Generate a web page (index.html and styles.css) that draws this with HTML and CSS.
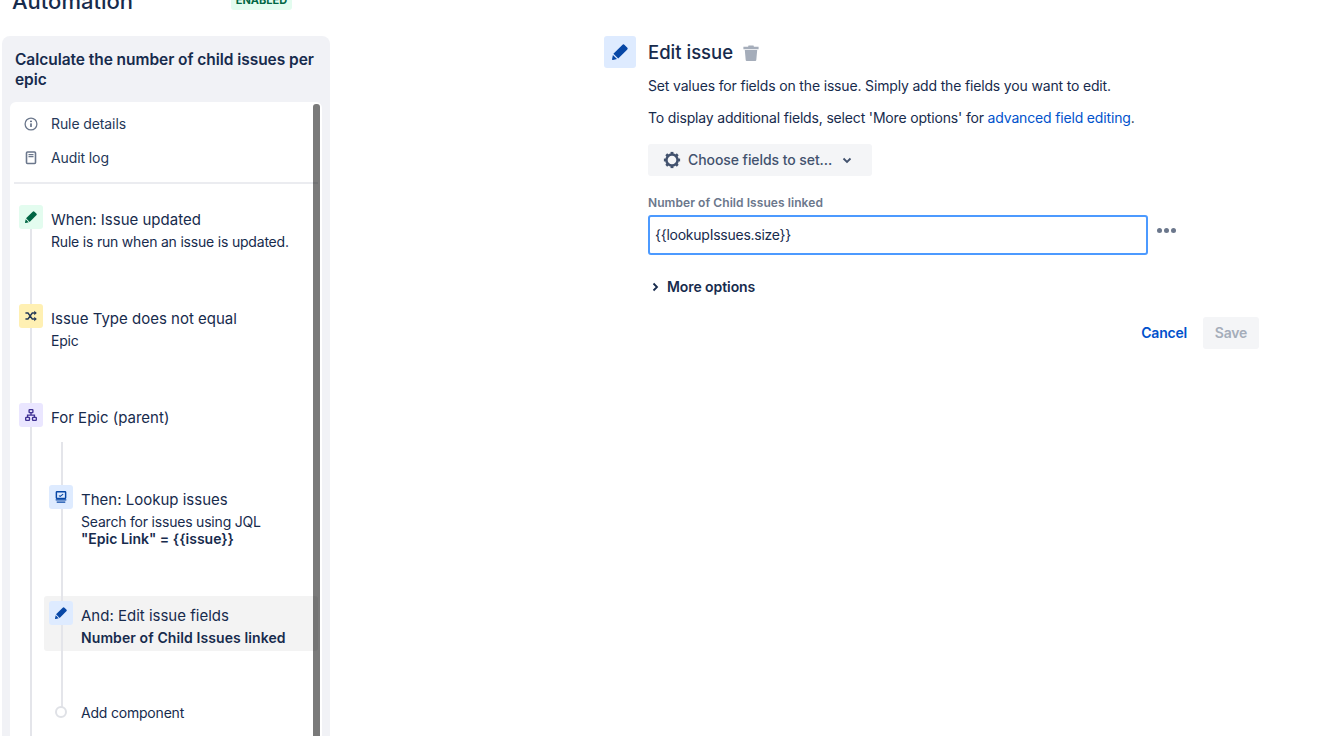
FILE: index.html
```html
<!DOCTYPE html>
<html lang="en">
<head>
<meta charset="utf-8">
<title>Automation</title>
<link rel="stylesheet" href="styles.css">
</head>
<body>
<div class="page">
  <aside class="side">
    <header class="side-head">
      <h1 class="page-title">Automation</h1>
      <span class="lozenge">ENABLED</span>
    </header>
    <section class="panel">
      <h2 class="rule-name">Calculate the number of child issues per epic</h2>
      <div class="rule-card">
        <div class="scrollbar"></div>
        <nav class="rule-nav">
          <div class="nav-row">
            <svg class="nav-icon" viewBox="0 0 16 16"><circle cx="8" cy="8" r="5.9" fill="none" stroke="#6b778c" stroke-width="1.3"/><rect x="7.3" y="7.2" width="1.4" height="3.8" rx=".5" fill="#42526e"/><circle cx="8" cy="5.3" r=".9" fill="#42526e"/></svg>
            <span>Rule details</span>
          </div>
          <div class="nav-row">
            <svg class="nav-icon" viewBox="0 0 16 16"><rect x="3.5" y="2" width="9" height="11.5" rx="1" fill="none" stroke="#6b778c" stroke-width="1.6"/><path d="M5.5 4.6h5M5.5 6.6h5" stroke="#6b778c" stroke-width="1.2"/></svg>
            <span>Audit log</span>
          </div>
        </nav>
        <div class="timeline">
          <div class="line line-main"></div>
          <div class="line line-nested"></div>

          <div class="step">
            <div class="badge badge-green">
              <svg viewBox="0 0 16 16"><path d="M10.3.9a1.6 1.6 0 0 1 2.3 0l2.5 2.5a1.6 1.6 0 0 1 0 2.3L6.2 14.6 1.4 9.8zM.9 11 5 15.100l-4 .9a.7.7 0 0 1-.9-.9z" fill="#006644"/></svg>
            </div>
            <div class="step-text">
              <div class="step-title">When: Issue updated</div>
              <div class="step-sub">Rule is run when an issue is updated.</div>
            </div>
          </div>

          <div class="step">
            <div class="badge badge-yellow">
              <svg viewBox="1 1 14 14" fill="none" stroke="#253858" stroke-width="1.6"><path d="M1.5 4.5h3l5 7h3M1.5 11.5h3l5-7h3"/><path d="M11.8 1.8l3 2.7-3 2.7zM11.8 8.8l3 2.7-3 2.7z" fill="#253858" stroke="none"/></svg>
            </div>
            <div class="step-text">
              <div class="step-title">Issue Type does not equal</div>
              <div class="step-sub">Epic</div>
            </div>
          </div>

          <div class="step step-for">
            <div class="badge badge-purple">
              <svg viewBox="1 1 14 14" fill="none" stroke="#403294" stroke-width="1.6"><rect x="5.8" y="1.8" width="4.4" height="3.4" rx=".6"/><rect x="1.8" y="10.8" width="4.4" height="3.4" rx=".6"/><rect x="9.8" y="10.8" width="4.4" height="3.4" rx=".6"/><path d="M8 5.2v3M4 10.8V8.2h8v2.6"/></svg>
            </div>
            <div class="step-text">
              <div class="step-title">For Epic (parent)</div>
            </div>
          </div>

          <div class="step step-nested step-lookup">
            <div class="badge badge-blue">
              <svg viewBox="1 1 14 14"><rect x="2.6" y="1.8" width="10.8" height="8" rx=".8" fill="none" stroke="#0747a6" stroke-width="1.7"/><path d="M5.5 6.4l1.6 1L10.5 4.600" fill="none" stroke="#0747a6" stroke-width="1.2"/><path d="M1.8 11.4h12.4M3 14h10" stroke="#0747a6" stroke-width="1.5"/></svg>
            </div>
            <div class="step-text">
              <div class="step-title">Then: Lookup issues</div>
              <div class="step-sub">Search for issues using JQL</div>
              <div class="step-sub step-strong">"Epic Link" = {{issue}}</div>
            </div>
          </div>

          <div class="step step-nested step-active">
            <div class="badge badge-blue">
              <svg viewBox="0 0 16 16"><path d="M10.3.9a1.6 1.6 0 0 1 2.3 0l2.5 2.5a1.6 1.6 0 0 1 0 2.3L6.2 14.6 1.4 9.8zM.9 11 5 15.100l-4 .9a.7.7 0 0 1-.9-.9z" fill="#0747a6"/></svg>
            </div>
            <div class="step-text">
              <div class="step-title">And: Edit issue fields</div>
              <div class="step-sub step-strong step-field">Number of Child Issues linked</div>
            </div>
          </div>

          <div class="step-add">
            <span class="add-dot"></span>
            <span>Add component</span>
          </div>
        </div>
      </div>
    </section>
  </aside>

  <main class="editor">
    <div class="editor-icon">
      <svg viewBox="0 0 16 16"><path d="M10.3.9a1.6 1.6 0 0 1 2.3 0l2.5 2.5a1.6 1.6 0 0 1 0 2.3L6.2 14.6 1.4 9.8zM.9 11 5 15.100l-4 .9a.7.7 0 0 1-.9-.9z" fill="#0747a6"/></svg>
    </div>
    <div class="editor-body">
      <div class="editor-head">
        <h2 class="editor-title">Edit issue</h2>
        <svg class="trash" viewBox="0 0 16 16"><path d="M.4 1.8h15.2v2.4H.4zM5 2l.5-1.6h5L11 2z" fill="#a5adba"/><path d="M1.8 5h12.4l-.9 10a1 1 0 0 1-1 .9H3.7a1 1 0 0 1-1-.9z" fill="#a5adba"/></svg>
      </div>
      <p class="editor-text first">Set values for fields on the issue. Simply add the fields you want to edit.</p>
      <p class="editor-text">To display additional fields, select 'More options' for <a class="link" href="#">advanced field editing</a>.</p>
      <button class="choose-btn" type="button">
        <svg class="gear" viewBox="0 0 20 20"><circle cx="10" cy="10" r="6.2" fill="none" stroke="#42526e" stroke-width="2.8"/><g fill="#42526e"><rect x="8.4" y="1" width="3.2" height="3.2"/><rect x="8.4" y="15.8" width="3.2" height="3.2"/><rect x="1" y="8.4" width="3.2" height="3.2"/><rect x="15.8" y="8.4" width="3.2" height="3.2"/><rect x="3.2" y="3.2" width="3" height="3" transform="rotate(45 4.7 4.7)"/><rect x="13.8" y="3.2" width="3" height="3" transform="rotate(45 15.3 4.7)"/><rect x="3.2" y="13.8" width="3" height="3" transform="rotate(45 4.7 15.3)"/><rect x="13.8" y="13.8" width="3" height="3" transform="rotate(45 15.3 15.3)"/></g></svg>
        <span>Choose fields to set...</span>
        <svg class="chev" viewBox="0 0 12 12"><path d="M2.5 4.5 6 8l3.5-3.5" fill="none" stroke="#42526e" stroke-width="1.8"/></svg>
      </button>
      <label class="field-label">Number of Child Issues linked</label>
      <div class="field-row">
        <div class="field-input">{{lookupIssues.size}}</div>
        <div class="dots"><i></i><i></i><i></i></div>
      </div>
      <div class="more">
        <svg class="more-chev" viewBox="0 0 12 12"><path d="M4.5 2.5 8 6 4.5 9.5" fill="none" stroke="#172b4d" stroke-width="1.8"/></svg>
        <span>More options</span>
      </div>
      <div class="actions">
        <a class="cancel" href="#">Cancel</a>
        <button class="save" type="button">Save</button>
      </div>
    </div>
  </main>
</div>
</body>
</html>
```
FILE: styles.css
```css
* { box-sizing: border-box; }
html, body { margin: 0; height: 100%; overflow: hidden; background: #fff; }
body { font-family: Inter, "Noto Sans", sans-serif; color: #172b4d; font-size: 14px; }
.page { display: flex; align-items: flex-start; height: 736px; overflow: hidden; }

.side { width: 330px; flex: none; padding-left: 2px; }
.side-head { display: flex; align-items: flex-end; height: 36px; margin-top: -10px; margin-bottom: 10px; position: relative; }
.page-title { margin: 0 0 9px 10px; font-size: 22px; font-weight: 500; line-height: 32px; width: 219px; flex: none; color: #172b4d; }
.lozenge { background: #e3fcef; color: #006644; font-size: 11px; font-weight: 700; line-height: 16px; padding: 0 4px; border-radius: 3px; margin-bottom: 16px; height: 18px; width: 61px; text-align: center; }

.panel { background: #f1f2f6; border-radius: 8px; padding: 14px 8px 0 8px; height: 760px; }
.rule-name { margin: 0 0 12px 5px; font-size: 15.5px; font-weight: 600; line-height: 20px; letter-spacing: -.05px; color: #172b4d; }
.rule-card { position: relative; background: #fff; border-radius: 6px; height: 700px; width: 312px; padding-top: 5px; }
.scrollbar { position: absolute; left: 303px; top: 2px; width: 7px; height: 700px; background: rgba(0,0,0,.52); border-radius: 3px; z-index: 3; }

.rule-nav { margin: 0 4px; padding-bottom: 7px; border-bottom: 2px solid #ebecf0; width: 304px; }
.nav-row { display: flex; align-items: center; height: 34px; padding-left: 9px; font-size: 14px; letter-spacing: -.1px; gap: 12px; line-height: 20px; color: #253858; }
.nav-icon { width: 16px; height: 16px; flex: none; }

.timeline { position: relative; padding-top: 21px; }
.line { position: absolute; width: 2px; background: #e4e5ea; z-index: 1; }
.line-main { left: 20px; top: 40px; height: 560px; }
.line-nested { left: 51px; top: 258px; height: 265px; }

.step { position: relative; display: flex; gap: 8px; height: 99px; padding-left: 9px; }
.step-for { height: 82px; }
.step-lookup { height: 111px; }
.step-nested { margin-left: 30px; padding-left: 9px; }
.step-active { margin-left: 34px; margin-right: 4px; padding: 5px 0 0 5px; height: 55px; background: #f3f3f3; border-radius: 3px; }
.badge { position: relative; z-index: 2; width: 24px; height: 24px; flex: none; border-radius: 3px; display: flex; align-items: center; justify-content: center; }
.badge svg { width: 12px; height: 12px; }
.badge-green { background: #e3fcef; }
.badge-yellow { background: #fff0b3; }
.badge-purple { background: #eae6ff; }
.badge-blue { background: #deebff; }
.step-title { font-size: 15px; line-height: 20px; padding-top: 5px; color: #172b4d; }
.step-sub { font-size: 14px; line-height: 17px; letter-spacing: -.2px; color: #172b4d; }
.step-title + .step-sub { margin-top: 3px; }
.step-strong { font-weight: 600; letter-spacing: 0; }
.step-field { letter-spacing: .1px; }
.step-add { position: relative; display: flex; align-items: center; gap: 14px; height: 20px; margin: 51px 0 0 45px; font-size: 14px; letter-spacing: -.2px; color: #172b4d; }
.add-dot { position: relative; z-index: 2; width: 12px; height: 12px; border-radius: 50%; background: #fff; border: 2px solid #dfe1e6; flex: none; }

.editor { flex: none; display: flex; gap: 12px; margin-left: 274px; padding-top: 36px; }
.editor-icon { width: 32px; height: 32px; background: #deebff; border-radius: 3px; display: flex; align-items: center; justify-content: center; flex: none; }
.editor-icon svg { width: 16px; height: 16px; }
.editor-body { width: 611px; }
.editor-head { display: flex; align-items: center; gap: 10px; height: 32px; }
.editor-title { margin: 0; font-size: 18.5px; font-weight: 500; line-height: 32px; color: #172b4d; }
.trash { width: 16px; height: 16px; margin-top: 1px; }
.editor-text { margin: 0; line-height: 20px; font-size: 14px; letter-spacing: -.165px; color: #172b4d; }
.editor-text.first { margin: 8px 0 12px; }
.link { color: #0052cc; text-decoration: none; }
.choose-btn { display: flex; align-items: center; width: 224px; height: 32px; margin-top: 16px; padding: 0 0 0 15px; border: 0; border-radius: 3px; background: #f4f5f7; color: #42526e; font: 500 14px/20px Inter, sans-serif; letter-spacing: -.07px; }
.gear { width: 18px; height: 18px; margin-right: 7px; flex: none; }
.chev { width: 12px; height: 12px; margin-left: 9px; flex: none; }
.field-label { display: block; margin-top: 19px; font-size: 12px; font-weight: 600; line-height: 16px; letter-spacing: .07px; color: #6b778c; }
.field-row { display: flex; align-items: center; margin-top: 4px; }
.field-input { width: 500px; height: 40px; border: 2px solid #4c9aff; border-radius: 3px; padding: 0 6px 0 5px; font-size: 14px; letter-spacing: -.25px; line-height: 36px; color: #172b4d; background: #fff; }
.dots { display: flex; gap: 2px; margin: 0 0 10px 9px; }
.dots i { width: 5px; height: 5px; border-radius: 50%; background: #6b778c; }
.more { display: flex; align-items: center; gap: 7px; margin-top: 22px; padding-left: 1px; font-weight: 600; line-height: 20px; letter-spacing: -.08px; color: #172b4d; }
.more-chev { width: 12px; height: 12px; margin-right: -1px; }
.actions { display: flex; justify-content: flex-end; align-items: center; gap: 16px; margin-top: 20px; }
.cancel { color: #0052cc; font-weight: 600; letter-spacing: -.2px; text-decoration: none; margin-bottom: 2px; }
.save { width: 56px; height: 32px; border: 0; border-radius: 3px; background: #f4f5f7; color: #a5adba; font: 600 14px/20px Inter, sans-serif; letter-spacing: -.2px; padding: 0; }
```
